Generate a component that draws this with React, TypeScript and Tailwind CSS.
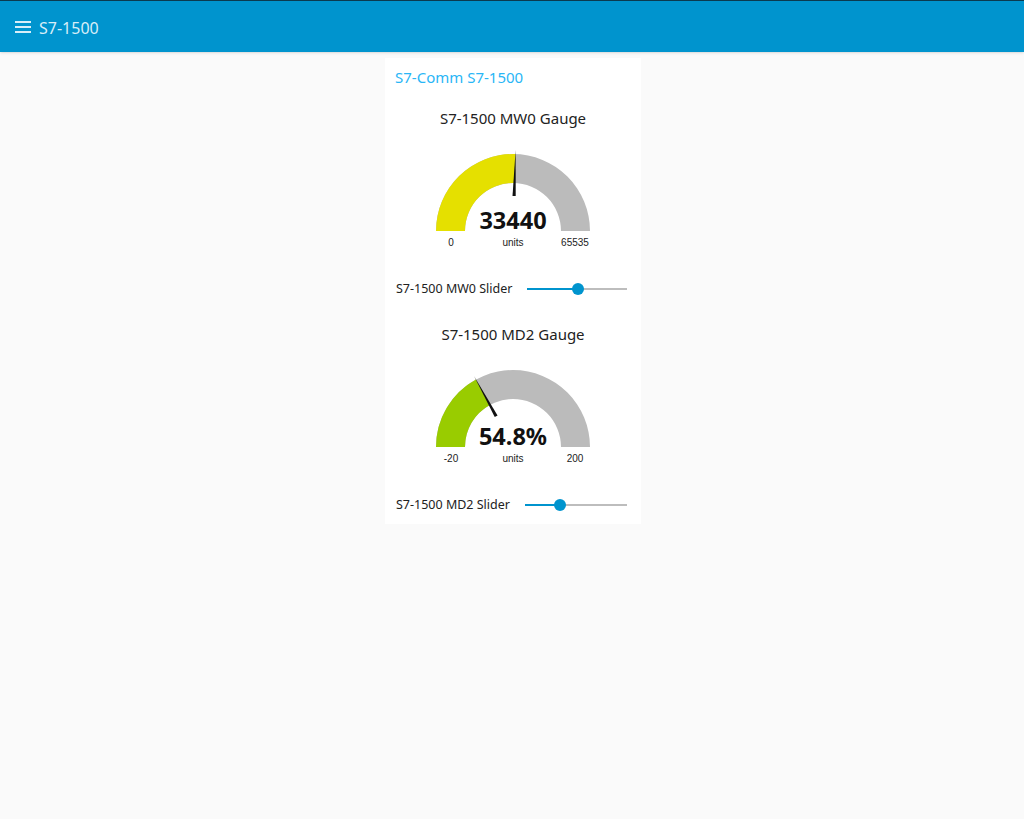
import React from "react"

const FONT = { fontFamily: '"Noto Sans", "Open Sans", sans-serif' }

type GaugeProps = {
  title: string
  value: number
  min: number
  max: number
  display: string
  color: string
}

function Gauge({ title, value, min, max, display, color }: GaugeProps) {
  const cx = 128
  const cy = 95
  const ro = 77
  const ri = 48
  const frac = (value - min) / (max - min)
  const a = Math.PI * (1 - frac)
  const px = (r: number) => cx + r * Math.cos(a)
  const py = (r: number) => cy - r * Math.sin(a)
  const nx = -Math.sin(a)
  const ny = -Math.cos(a)
  const bw = 1.6
  const fill = `M ${cx - ro} ${cy} A ${ro} ${ro} 0 0 1 ${px(ro)} ${py(ro)} L ${px(ri)} ${py(ri)} A ${ri} ${ri} 0 0 0 ${cx - ri} ${cy} Z`
  const bg = `M ${cx - ro} ${cy} A ${ro} ${ro} 0 0 1 ${cx + ro} ${cy} L ${cx + ri} ${cy} A ${ri} ${ri} 0 0 0 ${cx - ri} ${cy} Z`
  const needle = `M ${px(35) + nx * bw} ${py(35) + ny * bw} L ${px(81)} ${py(81)} L ${px(35) - nx * bw} ${py(35) - ny * bw} Z`

  return (
    <div className="h-[166px] flex flex-col">
      <div className="h-[36px] flex items-center justify-center text-[15px] text-[#222]">{title}</div>
      <svg width="256" height="130" viewBox="0 0 256 130" className="block">
        <path d={bg} fill="#bbbbbb" />
        <path d={fill} fill={color} />
        <path d={needle} fill="#111" />
        <text
          x={cx}
          y={93}
          textAnchor="middle"
          fontSize="23.5"
          fontWeight="700"
          fill="#111"
          fontFamily='"Noto Sans", sans-serif'
        >
          {display}
        </text>
        <g fontSize="10" fill="#222" fontFamily='"Liberation Sans", Arial, sans-serif' textAnchor="middle">
          <text x={cx - 62} y={110}>{min}</text>
          <text x={cx} y={110}>units</text>
          <text x={cx + 62} y={110}>{max}</text>
        </g>
      </svg>
    </div>
  )
}

function Slider({ label, pct }: { label: string; pct: number }) {
  return (
    <div className="h-[42px] flex items-center pt-[4px] pl-[11px] pr-[14px]">
      <span className="text-[12.5px] text-[#222] whitespace-nowrap">{label}</span>
      <div className="relative flex-1 ml-[15px] h-[12px] flex items-center">
        <div className="h-[2px] w-full bg-[#bdbdbd]" />
        <div className="absolute left-0 h-[2px] bg-[#0094ce]" style={{ width: `${pct}%` }} />
        <div
          className="absolute w-[12px] h-[12px] rounded-full bg-[#0094ce] -translate-x-1/2"
          style={{ left: `${pct}%` }}
        />
      </div>
    </div>
  )
}

export default function App() {
  return (
    <div className="min-h-[819px] bg-[#fafafa]" style={FONT}>
      <header className="h-[52px] bg-[#0094ce] border-t border-[#0b3a4f] flex items-center px-[15px] shadow-sm">
        <svg width="16" height="12" viewBox="0 0 16 12" className="mr-[8px]">
          <rect x="0" y="0" width="16" height="2" fill="#d8eef8" />
          <rect x="0" y="5" width="16" height="2" fill="#d8eef8" />
          <rect x="0" y="10" width="16" height="2" fill="#d8eef8" />
        </svg>
        <span className="text-[16px] text-[#d8eef8] pt-[2px]">S7-1500</span>
      </header>

      <div className="mx-auto mt-[6px] w-[256px] bg-white translate-x-[1px]">
        <div className="h-[38px] flex items-center px-[10px] text-[15px] text-[#29b6f6]">S7-Comm S7-1500</div>
        <div className="mt-[4px]">
          <Gauge title="S7-1500 MW0 Gauge" value={33440} min={0} max={65535} display="33440" color="#e5e000" />
          <Slider label="S7-1500 MW0 Slider" pct={51} />
        </div>
        <div className="mt-[8px]">
          <Gauge title="S7-1500 MD2 Gauge" value={54.8} min={-20} max={200} display="54.8%" color="#99cc00" />
          <Slider label="S7-1500 MD2 Slider" pct={34} />
        </div>
      </div>
    </div>
  )
}
